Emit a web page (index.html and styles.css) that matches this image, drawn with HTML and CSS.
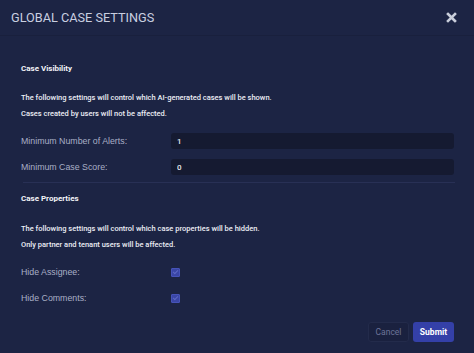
FILE: index.html
```html
<!DOCTYPE html>
<html lang="en">
<head>
    <meta charset="UTF-8" />
    <meta name="viewport" content="width=device-width, initial-scale=1.0" />
    <title>Global Case Settings</title>
    <link rel="stylesheet" href="styles.css">
</head>
<body>
    <div class="modal">
        <header class="modal-header">
            <h1>GLOBAL CASE SETTINGS</h1>
            <button class="close-btn" type="button" aria-label="Close">
                <svg width="11" height="11" viewBox="0 0 11 11">
                    <path d="M2 2 L9 9 M9 2 L2 9" stroke="#c9cedb" stroke-width="2.6" stroke-linecap="square" />
                </svg>
            </button>
        </header>

        <form class="modal-body">
            <!-- Case visibility -->
            <h2>Case Visibility</h2>
            <p class="note">
                The following settings will control which AI-generated cases will be shown.<br>
                Cases created by users will not be affected.
            </p>

            <div class="field-row first">
                <label for="minAlerts">Minimum Number of Alerts:</label>
                <input type="text" id="minAlerts" value="1" />
            </div>
            <div class="field-row">
                <label for="minScore">Minimum Case Score:</label>
                <input type="text" id="minScore" value="0" />
            </div>

            <hr>

            <!-- Case properties -->
            <h2>Case Properties</h2>
            <p class="note">
                The following settings will control which case properties will be hidden.<br>
                Only partner and tenant users will be affected.
            </p>

            <div class="field-row first">
                <label for="hideAssignee">Hide Assignee:</label>
                <input type="checkbox" id="hideAssignee" checked />
            </div>
            <div class="field-row">
                <label for="hideComments">Hide Comments:</label>
                <input type="checkbox" id="hideComments" checked />
            </div>

            <div class="modal-footer">
                <button type="button" class="btn btn-cancel">Cancel</button>
                <button type="submit" class="btn btn-submit">Submit</button>
            </div>
        </form>
    </div>
</body>
</html>
```

FILE: styles.css
```css
/* General Reset */
* {
    box-sizing: border-box;
    margin: 0;
    padding: 0;
}
body {
    font-family: 'Roboto', 'Liberation Sans', sans-serif;
    background: #1c2444;
    color: #e6e8f0;
}
.modal {
    height: 353px;
    background: #1c2444;
}
.modal-header {
    height: 36px;
    display: flex;
    align-items: center;
    justify-content: space-between;
    padding: 0 17px 0 11px;
    border-bottom: 1px solid #19203d;
}
.modal-header h1 {
    font-size: 12.7px;
    font-weight: 400;
    color: #c9cfe0;
}
.close-btn {
    background: none;
    border: none;
    display: flex;
    cursor: pointer;
}
.modal-body {
    padding: 27px 20px 0 21px;
}
h2 {
    font-size: 8px;
    font-weight: 700;
    line-height: 12px;
    color: #f2f3f8;
}
.note {
    margin-top: 15px;
    font-size: 7.5px;
    font-weight: 500;
    line-height: 16px;
    color: #eceef5;
}
.field-row {
    display: grid;
    grid-template-columns: 150px 1fr;
    align-items: center;
    height: 16px;
    margin-top: 10px;
}
.field-row.first {
    margin-top: 11px;
}
label {
    font-family: 'Liberation Sans', sans-serif;
    font-size: 8.8px;
    color: #a9afc6;
}
input[type="text"] {
    height: 16px;
    background: #151a31;
    border: none;
    border-radius: 3px;
    padding: 0 6px;
    font-family: inherit;
    font-size: 8px;
    font-weight: 500;
    color: #e6e8f0;
    outline: none;
}
input[type="checkbox"] {
    appearance: none;
    width: 9px;
    height: 9px;
    background: #3a46a6;
    border: 1px solid #4653b8;
    border-radius: 1px;
    position: relative;
}
input[type="checkbox"]::after {
    content: '';
    position: absolute;
    left: 2px;
    top: 0;
    width: 2px;
    height: 4px;
    border: solid #5e69c4;
    border-width: 0 1px 1px 0;
    transform: rotate(45deg);
}
hr {
    border: none;
    border-top: 1px solid #283055;
    margin: 7px -1px 0 2px;
}
hr + h2 {
    margin-top: 10px;
}
hr + h2 + .note {
    margin-top: 16px;
}
.modal-footer {
    display: flex;
    justify-content: flex-end;
    gap: 4px;
    margin-top: 16px;
}
.btn {
    height: 20px;
    width: 41px;
    border-radius: 3px;
    font-family: inherit;
    font-size: 8.5px;
    cursor: pointer;
}
.btn-cancel {
    background: #1a213f;
    border: 1px solid #232b4b;
    color: #6d7499;
}
.btn-submit {
    background: #3440a8;
    border: none;
    color: #fff;
    font-weight: 700;
}
```
